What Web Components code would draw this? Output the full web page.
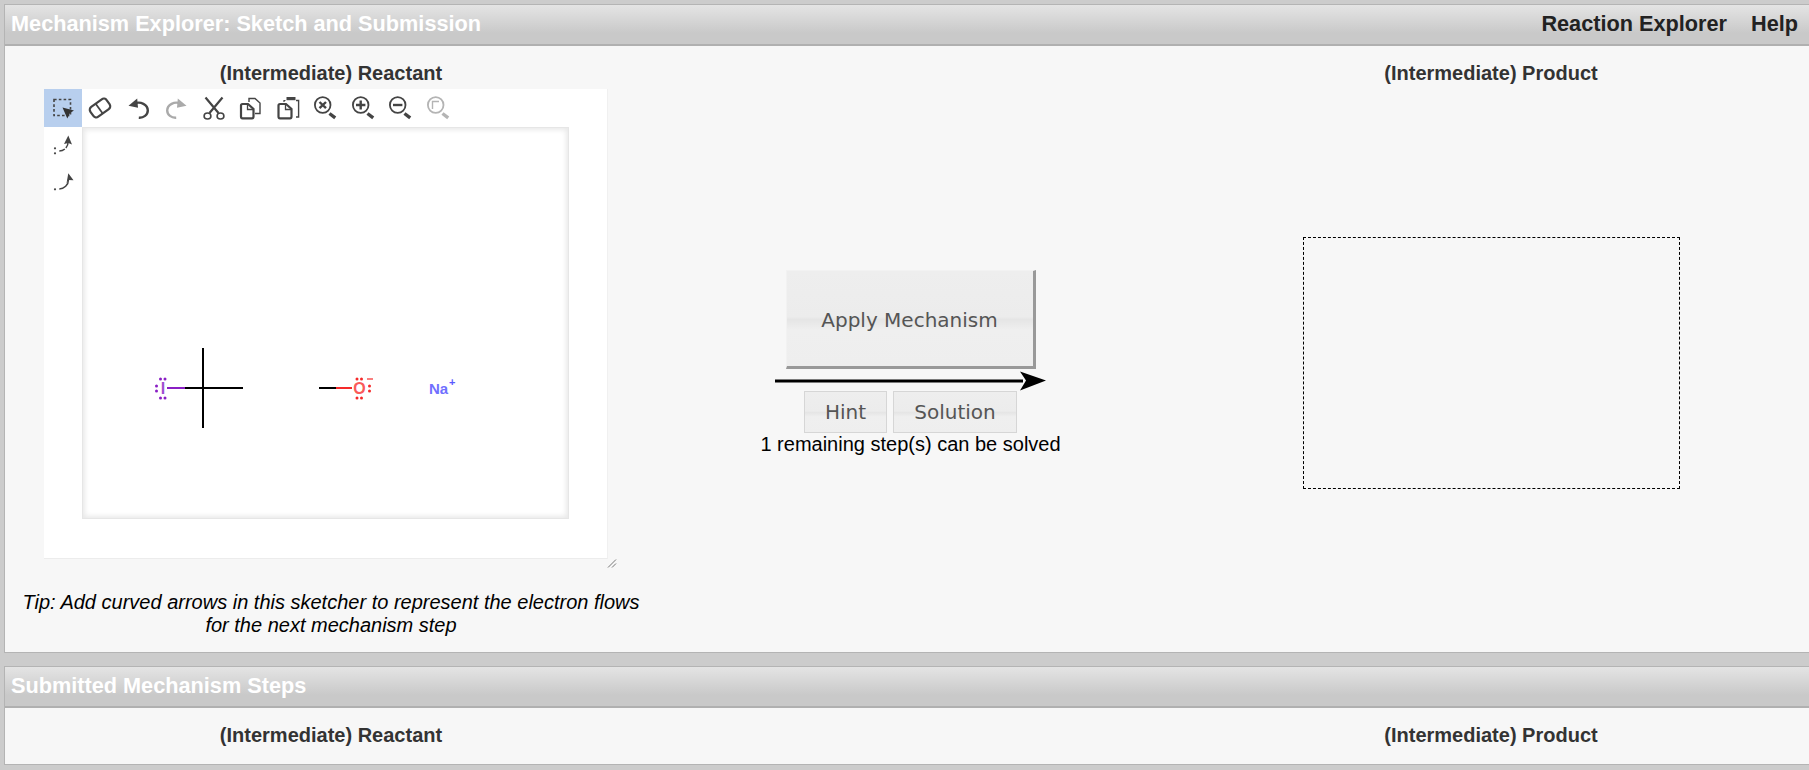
<!DOCTYPE html>
<html><head><meta charset="utf-8"><title>Mechanism Explorer</title>
<style>
html,body{margin:0;padding:0;height:770px;overflow:hidden;background:#ccc;font-family:"Liberation Sans",Arial,sans-serif;}
body{padding-top:4px;box-sizing:border-box;}
</style></head><body>
<template id="t-panel"><style>
:host{display:block;margin:0 -5px 13px 4px;border:1px solid #b4b4b4;border-right:0;background:#f7f7f7;}
header{display:flex;justify-content:space-between;align-items:center;height:39px;padding:0 11px 2px 6px;box-sizing:border-box;height:41px;background:linear-gradient(#e4e4e4,#c9c9c9 72%,#c9c9c9);border-bottom:2px solid #b0b0b0;margin-right:5px;}
h2{margin:0;font:bold 21.7px "Liberation Sans",Arial,sans-serif;color:#fff;}
.r{display:flex;gap:24px;font:bold 21.7px "Liberation Sans",Arial,sans-serif;color:#222;}
</style><header><h2><slot name="title"></slot></h2><div class="r"><slot name="links"></slot></div></header><slot></slot></template>

<template id="t-col"><style>
:host{display:block;text-align:center;font:bold 20px "Liberation Sans",Arial,sans-serif;color:#333;}
</style><slot></slot></template>

<template id="t-tb"><style>
:host{display:block;width:37.5px;height:38px;flex:none;}
:host([wide]){width:38px}
:host([sel]){background:#b8cfee;}
::slotted(svg){display:block;}
</style><slot></slot></template>

<template id="t-sketch"><style>
:host{display:block;position:relative;width:564px;height:470px;margin-left:39px;background:#fff;border-bottom:1px solid #ececec;border-right:1px solid #f0f0f0;box-sizing:border-box;text-align:left;}
.top{display:flex;height:38px;position:relative;z-index:1;}
.main{display:flex;}
.left{width:38px;display:flex;flex-direction:column;}
.canvas{width:487px;height:392px;box-sizing:border-box;border:1px solid #e6e6e6;box-shadow:inset 0 0 5px 2px #e9e9e9;background:#fff;}
.grip{position:absolute;right:-10px;bottom:-10px;width:10px;height:10px;}
</style><div class="top"><slot name="top"></slot></div><div class="main"><div class="left"><slot name="left"></slot></div><div class="canvas"><slot name="canvas"></slot></div></div>
<svg class="grip" viewBox="0 0 10 10"><path d="M1 9.5 9 1.5M5 9.5 9 5.5" stroke="#777" stroke-width="1" fill="none"/></svg></template>

<template id="t-btn"><style>
:host{display:flex;align-items:center;justify-content:center;box-sizing:border-box;font:20px "DejaVu Sans",Verdana,sans-serif;color:#555;background:linear-gradient(#eeeeee,#ececec 48%,#e5e5e5 51%,#efefef 62%,#eeeeee);border:1px solid #d6d6d6;height:42px;}
:host([big]){width:250px;height:99px;border:0;border-top:1px solid #f2f2f2;border-left:1px solid #f2f2f2;border-right:3px solid #999;border-bottom:3px solid #999;padding-top:3px;}
</style><slot></slot></template>

<template id="t-center"><style>
:host{display:flex;flex-direction:column;align-items:center;width:507px;padding-top:224px;box-sizing:content-box;font:20px/23px "Liberation Sans",Arial,sans-serif;color:#000;}
.h{display:flex;gap:6px;}
svg{display:block;margin:0;}
</style><slot name="btn"></slot>
<svg width="272" height="22" viewBox="0 0 272 22"><path d="M0 12H248" stroke="#000" stroke-width="3"/><path d="M245 2.5 271 11.5 245 21.5 251 11.5Z" fill="#000"/></svg>
<div class="h"><slot name="h"></slot></div><slot></slot></template>

<template id="t-box"><style>
:host{display:block;width:377px;height:252px;box-sizing:border-box;border:1px dashed #000;margin:0 auto;}
</style></template>

<mech-panel id="p1">
  <span slot="title">Mechanism Explorer: Sketch and Submission</span>
  <span slot="links">Reaction Explorer</span><span slot="links">Help</span>
  <div style="display:flex;height:606px">
    <mech-col style="width:652px;padding-top:16px;flex:none">
      <div style="height:27px;line-height:23px">(Intermediate) Reactant</div>
      <mech-sketch>
        <mech-tb slot="top" wide sel><svg width="38" height="38" viewBox="0 0 38 38"><rect x="10" y="10.5" width="16.5" height="16" fill="none" stroke="#444" stroke-width="1.6" stroke-dasharray="2.6 2.2"/><path d="M18.5 18.5 30 21.5 26 24 23.3 29.5Z" fill="#333"/></svg></mech-tb>
        <mech-tb slot="top"><svg width="38" height="38" viewBox="0 0 38 38"><g transform="rotate(-36 18 19)"><rect x="8" y="13" width="20" height="12" rx="3.5" fill="none" stroke="#444" stroke-width="2.2"/><path d="M17 13V25" stroke="#444" stroke-width="1.8"/></g></svg></mech-tb>
        <mech-tb slot="top"><svg width="38" height="38" viewBox="0 0 38 38"><path d="M14.5 14.5C20.5 12 27.8 15.5 27.8 21.5 27.8 26 23.5 29 18.8 28.7" fill="none" stroke="#444" stroke-width="2.4"/><path d="M8.5 16.7 17.2 9.5 18 18.7Z" fill="#444"/></svg></mech-tb>
        <mech-tb slot="top"><svg width="38" height="38" viewBox="0 0 38 38"><path d="M23.5 14.5C17.5 12 10.2 15.5 10.2 21.5 10.2 26 14.5 29 19.2 28.7" fill="none" stroke="#aaa" stroke-width="2.4"/><path d="M29.5 16.7 20.8 9.5 20 18.7Z" fill="#aaa"/></svg></mech-tb>
        <mech-tb slot="top"><svg width="38" height="38" viewBox="0 0 38 38"><path d="M10.5 8.5 23.5 24M27.5 8.5 14.5 24" stroke="#444" stroke-width="2.2" fill="none"/><ellipse cx="12.5" cy="27" rx="3.4" ry="3" fill="none" stroke="#444" stroke-width="1.6"/><ellipse cx="25.5" cy="27" rx="3.4" ry="3" fill="none" stroke="#444" stroke-width="1.6"/></svg></mech-tb>
        <mech-tb slot="top"><svg width="38" height="38" viewBox="0 0 38 38"><path d="M17 13V9.5H23L28 14V24.5H23" fill="none" stroke="#444" stroke-width="1.4"/><path d="M9 16.5Q9 15 10.5 15H16L21.5 20V27.5Q21.5 29.3 20 29.3H10.5Q9 29.3 9 27.5Z" fill="none" stroke="#444" stroke-width="2.2"/><path d="M15.5 15V20.5H21.5" fill="none" stroke="#444" stroke-width="1.3"/></svg></mech-tb>
        <mech-tb slot="top"><svg width="38" height="38" viewBox="0 0 38 38"><rect x="16.5" y="8" width="9" height="3.2" fill="#444"/><path d="M26 11.5H28.6V28H26" fill="none" stroke="#444" stroke-width="1.4"/><path d="M14 13V11.5H15.5" fill="none" stroke="#444" stroke-width="1.2"/><path d="M8.5 16.5Q8.5 15 10 15H16L21.5 20V27.5Q21.5 29.3 20 29.3H10Q8.5 29.3 8.5 27.5Z" fill="none" stroke="#444" stroke-width="2.2"/><path d="M15.5 15V20.5H21.5" fill="none" stroke="#444" stroke-width="1.3"/></svg></mech-tb>
        <mech-tb slot="top"><svg width="38" height="38" viewBox="0 0 38 38"><circle cx="15.7" cy="16" r="7.8" fill="none" stroke="#444" stroke-width="1.8"/><path d="M12.5 13 19 19.2M19 13 12.5 19.2" stroke="#444" stroke-width="2.4"/><path d="M22.5 24.5 28.2 28.8" stroke="#444" stroke-width="3.4"/></svg></mech-tb>
        <mech-tb slot="top"><svg width="38" height="38" viewBox="0 0 38 38"><circle cx="15.7" cy="16" r="7.8" fill="none" stroke="#444" stroke-width="1.8"/><path d="M11 16H20.4M15.7 11.5V20.5" stroke="#444" stroke-width="2.4"/><path d="M22.5 24.5 28.2 28.8" stroke="#444" stroke-width="3.4"/></svg></mech-tb>
        <mech-tb slot="top"><svg width="38" height="38" viewBox="0 0 38 38"><circle cx="15.7" cy="16" r="7.8" fill="none" stroke="#444" stroke-width="1.8"/><path d="M11 16H20.4" stroke="#444" stroke-width="2.4"/><path d="M22.5 24.5 28.2 28.8" stroke="#444" stroke-width="3.4"/></svg></mech-tb>
        <mech-tb slot="top"><svg width="38" height="38" viewBox="0 0 38 38"><circle cx="15.7" cy="16" r="7.8" fill="none" stroke="#b4b4b4" stroke-width="1.8"/><path d="M12.5 20V12.5H19" fill="none" stroke="#b4b4b4" stroke-width="1.4"/><path d="M22.5 24.5 28.2 28.8" stroke="#b4b4b4" stroke-width="3.4"/></svg></mech-tb>
        <mech-tb slot="left" wide><svg width="38" height="38" viewBox="0 0 38 38"><circle cx="11" cy="21.3" r="1.1" fill="#444"/><circle cx="11" cy="26.3" r="1.1" fill="#444"/><path d="M15.3 24C20 24 24 20.5 24.3 14" fill="none" stroke="#444" stroke-width="1.5" stroke-dasharray="6 1.5 30"/><path d="M24.3 8.5 28 17.5 24.3 16 20 17Z" fill="#444"/></svg></mech-tb>
        <mech-tb slot="left" wide><svg width="38" height="38" viewBox="0 0 38 38"><circle cx="11" cy="24.3" r="1.1" fill="#444"/><path d="M15.3 24C20 24 24.5 20 24.5 14.5" fill="none" stroke="#444" stroke-width="1.5"/><path d="M24.3 8.3 29.5 15.3 24.5 15 22.5 18.5Z" fill="#444"/></svg></mech-tb>
        <svg slot="canvas" width="485" height="390" viewBox="83 128 485 390" style="display:block">
          <g stroke-width="2" fill="none">
            <path d="M203 348V428M185 388H243" stroke="#000"/>
            <path d="M167 388H185" stroke="#8a1fc4"/>
            <path d="M319 388H336" stroke="#000"/>
            <path d="M336 388H352" stroke="#f52a2a"/>
          </g>
          <g fill="#8a1fc4"><circle cx="160.5" cy="379" r="1.5"/><circle cx="165" cy="379" r="1.5"/><circle cx="160.5" cy="398" r="1.5"/><circle cx="165" cy="398" r="1.5"/><circle cx="156.5" cy="386" r="1.5"/><circle cx="156.5" cy="391" r="1.5"/></g>
          <text x="163" y="394" text-anchor="middle" font-family="Liberation Sans" font-size="16" fill="#a04fd0">I</text>
          <g fill="#f52a2a"><circle cx="357" cy="379" r="1.5"/><circle cx="361.5" cy="379" r="1.5"/><circle cx="357" cy="398" r="1.5"/><circle cx="361.5" cy="398" r="1.5"/><circle cx="369.5" cy="386" r="1.5"/><circle cx="369.5" cy="391" r="1.5"/></g>
          <text x="359.5" y="394" text-anchor="middle" font-family="Liberation Sans" font-size="16" fill="#fa5a5a">O</text>
          <path d="M367 379H373" stroke="#f52a2a" stroke-width="1.2"/>
          <text x="429" y="394" font-family="Liberation Sans" font-size="15" fill="#7070ff">Na</text>
          <text x="449" y="386" font-family="Liberation Sans" font-size="11" fill="#5a5aff">+</text>
        </svg>
      </mech-sketch>
      <div style="font:italic 20px/23px 'Liberation Sans',Arial,sans-serif;color:#000;width:630px;margin:32px 0 0 11px">Tip: Add curved arrows in this sketcher to represent the electron flows for the next mechanism step</div>
    </mech-col>
    <mech-center>
      <mech-btn slot="btn" big>Apply Mechanism</mech-btn>
      <mech-btn slot="h" style="width:83px">Hint</mech-btn>
      <mech-btn slot="h" style="width:124px">Solution</mech-btn>
      1 remaining step(s) can be solved
    </mech-center>
    <mech-col style="flex:1;padding:16px 0 0 4px">
      <div style="height:149px;line-height:23px">(Intermediate) Product</div>
      <mech-box style="margin-top:26px"></mech-box>
    </mech-col>
  </div>
</mech-panel>
<mech-panel id="p2">
  <span slot="title">Submitted Mechanism Steps</span>
  <div style="display:flex;height:56px">
    <mech-col style="width:652px;padding-top:16px;flex:none;line-height:23px">(Intermediate) Reactant</mech-col>
    <div style="width:507px"></div>
    <mech-col style="flex:1;padding:16px 0 0 4px;line-height:23px">(Intermediate) Product</mech-col>
  </div>
</mech-panel>
<script>
const def=(n,t)=>customElements.define(n,class extends HTMLElement{constructor(){super();this.attachShadow({mode:"open"}).appendChild(document.getElementById(t).content.cloneNode(true));}});
def("mech-panel","t-panel");def("mech-col","t-col");def("mech-tb","t-tb");def("mech-sketch","t-sketch");def("mech-btn","t-btn");def("mech-center","t-center");def("mech-box","t-box");
</script>
</body></html>
